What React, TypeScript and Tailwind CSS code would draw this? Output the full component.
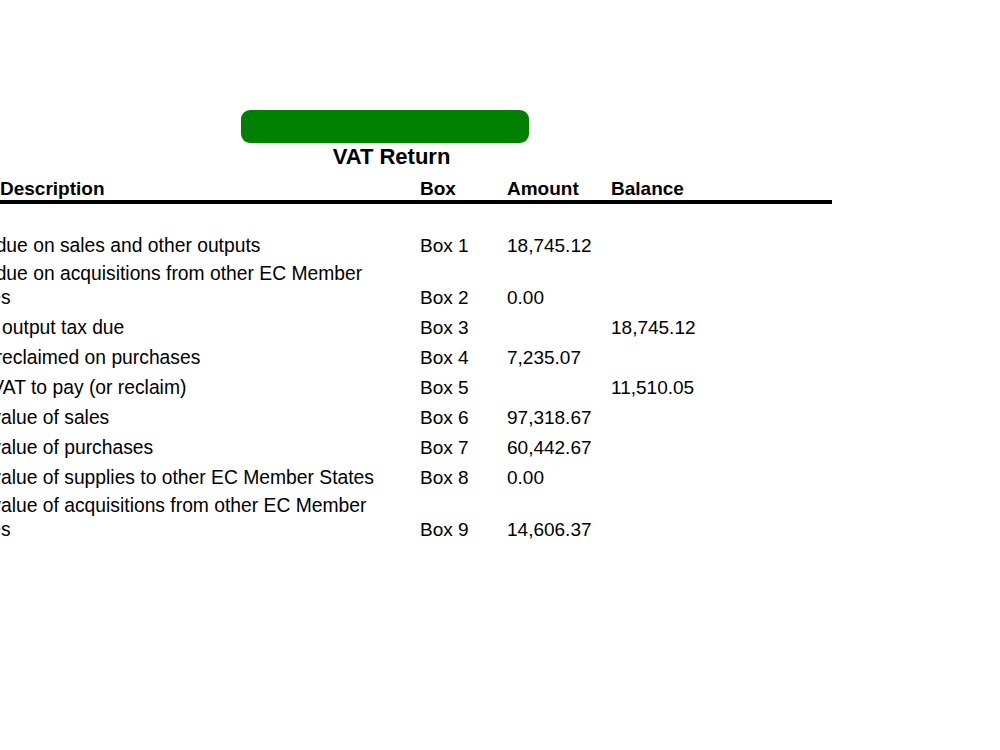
const rows = [
  { desc: 'VAT due on sales and other outputs', box: 'Box 1', amount: '18,745.12', balance: '' },
  { desc: 'VAT due on acquisitions from other EC Member States', box: 'Box 2', amount: '0.00', balance: '', wrap: true },
  { desc: 'Total output tax due', box: 'Box 3', amount: '', balance: '18,745.12' },
  { desc: 'VAT reclaimed on purchases', box: 'Box 4', amount: '7,235.07', balance: '' },
  { desc: 'Net VAT to pay (or reclaim)', box: 'Box 5', amount: '', balance: '11,510.05' },
  { desc: 'Net value of sales', box: 'Box 6', amount: '97,318.67', balance: '' },
  { desc: 'Net value of purchases', box: 'Box 7', amount: '60,442.67', balance: '' },
  { desc: 'Net value of supplies to other EC Member States', box: 'Box 8', amount: '0.00', balance: '' },
  { desc: 'Net value of acquisitions from other EC Member States', box: 'Box 9', amount: '14,606.37', balance: '', wrap: true },
]

export default function App() {
  return (
    <div className="min-h-[750px] w-[1000px] overflow-hidden bg-white pt-[110px] text-black [font-family:'Liberation_Sans',Arial,sans-serif]">
      <div className="ml-[241px] h-[33px] w-[288px] rounded-[9px] bg-[#008000]" />
      <h1 className="mt-[2px] w-[783px] text-center text-[22px] leading-[24px] font-bold">VAT Return</h1>

      <div className="mt-[9px] w-[832px]">
        <div className="grid grid-cols-[420px_87px_104px_221px] border-b-4 border-black text-[19px] leading-[22px] font-bold">
          <div>Description</div>
          <div>Box</div>
          <div>Amount</div>
          <div>Balance</div>
        </div>

        <div className="pt-[27px]">
          {rows.map((r) => (
            <div
              key={r.box}
              className={`grid grid-cols-[420px_87px_104px_221px] items-end pb-[3px] text-[19px] leading-[24px] ${r.wrap ? 'pt-[1px]' : 'pt-[3px]'}`}
            >
              <div className="overflow-hidden">
                <div className="-ml-[44px] w-[454px] text-[19.3px]">{r.desc}</div>
              </div>
              <div>{r.box}</div>
              <div>{r.amount}</div>
              <div>{r.balance}</div>
            </div>
          ))}
        </div>
      </div>
    </div>
  )
}
